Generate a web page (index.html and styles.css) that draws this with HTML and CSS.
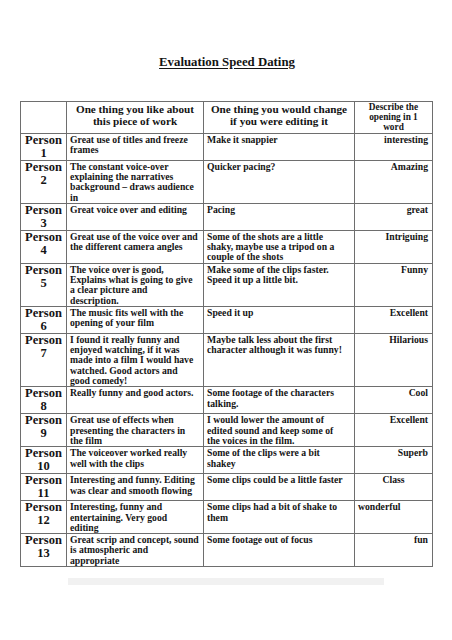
FILE: index.html
```html
<!DOCTYPE html>
<html>
<head>
<meta charset="utf-8">
<link rel="stylesheet" href="styles.css">
</head>
<body>
<div class="page">
  <h1 class="title">Evaluation Speed Dating</h1>
  <table class="grid">
    <colgroup>
      <col class="c1"><col class="c2"><col class="c3"><col class="c4">
    </colgroup>
    <thead>
      <tr>
        <th></th>
        <th class="hbig">One thing you like about<br>this piece of work</th>
        <th class="hbig">One thing you would change<br>if you were editing it</th>
        <th class="hsmall">Describe the<br>opening in 1<br>word</th>
      </tr>
    </thead>
    <tbody>
      <tr><td class="who">Person<br>1</td><td>Great use of titles and freeze<br>frames</td><td>Make it snappier</td><td class="r">interesting</td></tr>
      <tr><td class="who">Person<br>2</td><td>The constant voice-over<br>explaining the narratives<br>background – draws audience<br>in</td><td>Quicker pacing?</td><td class="r">Amazing</td></tr>
      <tr><td class="who">Person<br>3</td><td>Great voice over and editing</td><td>Pacing</td><td class="r">great</td></tr>
      <tr><td class="who">Person<br>4</td><td>Great use of the voice over and<br>the different camera angles</td><td>Some of the shots are a little<br>shaky, maybe use a tripod on a<br>couple of the shots</td><td class="r">Intriguing</td></tr>
      <tr><td class="who">Person<br>5</td><td>The voice over is good,<br>Explains what is going to give<br>a clear picture and<br>description.</td><td>Make some of the clips faster.<br>Speed it up a little bit.</td><td class="r">Funny</td></tr>
      <tr><td class="who">Person<br>6</td><td>The music fits well with the<br>opening of your film</td><td>Speed it up</td><td class="r">Excellent</td></tr>
      <tr><td class="who">Person<br>7</td><td>I found it really funny and<br>enjoyed watching, if it was<br>made into a film I would have<br>watched. Good actors and<br>good comedy!</td><td>Maybe talk less about the first<br>character although it was funny!</td><td class="r">Hilarious</td></tr>
      <tr><td class="who">Person<br>8</td><td>Really funny and good actors.</td><td>Some footage of the characters<br>talking.</td><td class="r">Cool</td></tr>
      <tr><td class="who">Person<br>9</td><td>Great use of effects when<br>presenting the characters in<br>the film</td><td>I would lower the amount of<br>edited sound and keep some of<br>the voices in the film.</td><td class="r">Excellent</td></tr>
      <tr><td class="who">Person<br>10</td><td>The voiceover worked really<br>well with the clips</td><td>Some of the clips were a bit<br>shakey</td><td class="r">Superb</td></tr>
      <tr><td class="who">Person<br>11</td><td>Interesting and funny. Editing<br>was clear and smooth flowing</td><td>Some clips could be a little faster</td><td class="c">Class</td></tr>
      <tr><td class="who">Person<br>12</td><td>Interesting, funny and<br>entertaining. Very good<br>editing</td><td>Some clips had a bit of shake to<br>them</td><td class="l">wonderful</td></tr>
      <tr><td class="who">Person<br>13</td><td>Great scrip and concept, sound<br>is atmospheric and<br>appropriate</td><td>Some footage out of focus</td><td class="r">fun</td></tr>
    </tbody>
  </table>
  <div class="footbar"></div>
</div>
</body>
</html>
```
FILE: styles.css
```css
html, body {
  margin: 0;
  padding: 0;
  background: #ffffff;
}
body {
  font-family: "Liberation Serif", "Times New Roman", serif;
  color: #141414;
}
.page {
  width: 452px;
  padding-top: 54px;
}
.title {
  margin: 0;
  text-align: center;
  font-size: 12.8px;
  line-height: 17px;
  font-weight: bold;
  text-decoration: underline;
  text-underline-offset: 2px;
  padding-left: 2px;
}
.grid {
  margin: 30px 0 0 20px;
  width: 412px;
  table-layout: fixed;
  border-collapse: collapse;
}
.c1 { width: 46px; }
.c2 { width: 137px; }
.c3 { width: 151px; }
.c4 { width: 78px; }
.grid th, .grid td {
  border: 1px solid #6e6e6e;
  vertical-align: top;
  font-weight: bold;
  padding: 1px 3px 0 3px;
  white-space: nowrap;
  overflow: hidden;
}
.grid th.hbig {
  font-size: 11.2px;
  line-height: 11.7px;
  text-align: center;
  padding-top: 2px;
}
.grid th.hsmall {
  font-size: 9.3px;
  line-height: 10.2px;
  text-align: center;
  padding: 0 2px;
}
.grid td {
  font-size: 9.7px;
  line-height: 10.3px;
  text-align: left;
}
.grid td.who {
  font-size: 12.5px;
  line-height: 13px;
  text-align: center;
  padding: 0 1px;
}
.grid td.r { text-align: right; padding-right: 4px; }
.grid td.c { text-align: center; }
.grid td.l { text-align: left; }
.footbar {
  margin: 11px 0 0 68px;
  width: 316px;
  height: 7px;
  background: #f1f1f1;
}
```
